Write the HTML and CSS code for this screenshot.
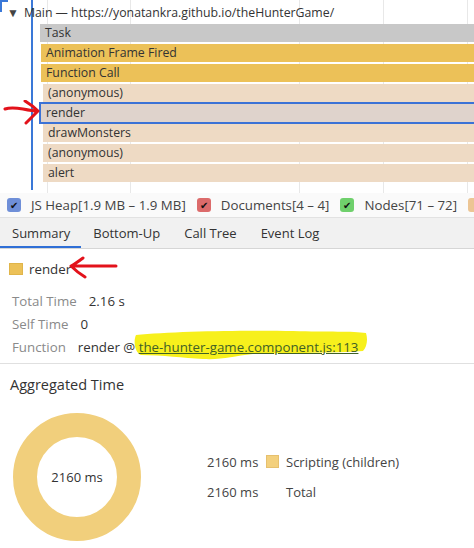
FILE: index.html
```html
<!DOCTYPE html>
<html>
<head>
<meta charset="utf-8">
<link rel="stylesheet" href="styles.css">
</head>
<body>
<div class="page">
  <section class="flame">
    <div class="grid">
      <span class="gl" style="left:47px"></span>
      <span class="gl" style="left:130px"></span>
      <span class="gl" style="left:299px"></span>
      <span class="gl" style="left:383px"></span>
      <span class="gl" style="left:467px"></span>
    </div>
    <div class="sel-corner"></div>
    <div class="sel-line"></div>
    <div class="track-head"><span class="tri">▼</span><span>Main — https://yonatankra.github.io/theHunterGame/</span></div>
    <div class="bars">
      <div class="bar task">Task</div>
      <div class="bar yellow">Animation Frame Fired</div>
      <div class="bar yellow">Function Call</div>
      <div class="bar beige">(anonymous)</div>
      <div class="bar beige selected">render</div>
      <div class="bar beige">drawMonsters</div>
      <div class="bar beige">(anonymous)</div>
      <div class="bar beige">alert</div>
    </div>
    <svg class="arrow1" width="40" height="26" viewBox="0 0 40 26"><path d="M2 9 C8 7 14 8 20 9 C25 10 30 11 34 11 M22 1 C27 4 31 7 35 11 C31 15 27 19 23 23" fill="none" stroke="#e3121b" stroke-width="3" stroke-linecap="round" stroke-linejoin="round"/></svg>
  </section>

  <div class="counters">
    <label class="cb"><span class="box blue">✔</span>JS Heap[1.9 MB – 1.9 MB]</label>
    <label class="cb"><span class="box red">✔</span>Documents[4 – 4]</label>
    <label class="cb"><span class="box green">✔</span>Nodes[71 – 72]</label>
    <span class="box orange"></span>
  </div>

  <nav class="tabs">
    <span class="tab active">Summary</span>
    <span class="tab">Bottom-Up</span>
    <span class="tab">Call Tree</span>
    <span class="tab">Event Log</span>
  </nav>

  <section class="summary">
    <div class="title"><span class="swatch"></span>render</div>
    <svg class="arrow2" width="52" height="24" viewBox="0 0 52 24"><path d="M48 10 C38 10 20 10 4 10 M15 2 C11 5 7 8 3 10 C7 14 12 18 17 21" fill="none" stroke="#e3121b" stroke-width="3" stroke-linecap="round" stroke-linejoin="round"/></svg>
    <div class="row"><span class="lbl">Total Time</span><span class="val">2.16 s</span></div>
    <div class="row"><span class="lbl">Self Time</span><span class="val">0</span></div>
    <div class="row"><span class="lbl">Function</span><span class="val">render @ <span class="linkwrap"><svg class="hl" width="236" height="32" viewBox="0 0 236 32"><path d="M3 6 C40 2 120 1 160 2 C195 3 220 2 233 4 C235 10 234 18 230 22 C200 24 160 24 120 25 C100 27 90 31 70 30 C50 29 30 26 8 26 C2 24 0 12 3 6 Z" fill="#f7f01c"/></svg><a class="link">the-hunter-game.component.js:113</a></span></span></div>
  </section>

  <section class="agg">
    <h3 class="agg-title">Aggregated Time</h3>
    <div class="agg-body">
      <div class="donut">
        <svg width="128" height="128" viewBox="0 0 128 128"><circle cx="64" cy="64" r="52" fill="none" stroke="#f1cf7c" stroke-width="24"/></svg>
        <span class="donut-label">2160 ms</span>
      </div>
      <div class="legend">
        <div class="lg-row"><span class="ms">2160 ms</span><span class="lg-sw"></span><span>Scripting (children)</span></div>
        <div class="lg-row"><span class="ms">2160 ms</span><span class="lg-sw none"></span><span>Total</span></div>
      </div>
    </div>
  </section>
</div>
</body>
</html>
```

FILE: styles.css
```css
* { box-sizing: border-box; }
html, body { margin: 0; padding: 0; background: #fff; }
body {
  font-family: "Open Sans", "Noto Sans", sans-serif;
  font-size: 12px;
  color: #333;
}
.page { width: 474px; height: 548px; overflow: hidden; }

.flame {
  position: relative;
  height: 193px;
  background: #fff;
  overflow: hidden;
}
.grid { position: absolute; inset: 0; }
.gl { position: absolute; top: 0; bottom: 0; width: 1px; background: rgba(0,0,0,0.09); }
.sel-corner {
  position: absolute; left: 0; top: 0; width: 8px; height: 12px;
  border-left: 2px solid #3a78d8; border-top: 2px solid #3a78d8;
}
.sel-line {
  position: absolute; left: 31px; top: 0; width: 2px; height: 190px; background: #3a78d8;
}
.track-head {
  position: relative;
  height: 24px;
  display: flex;
  align-items: center;
  padding-left: 7px;
  gap: 5px;
  color: #333;
  font-size: 12.3px;
}
.tri { font-size: 12px; color: #444; }
.bars {
  position: relative;
  display: flex;
  flex-direction: column;
  gap: 2px;
  padding-left: 41px;
}
.bar {
  height: 18px;
  line-height: 18px;
  padding-left: 5px;
  font-size: 12.3px;
  color: #333;
  white-space: nowrap;
}
.task { background: #c8c8c8; margin-left: -1px; }
.yellow { background: #ecc158; }
.beige { background: #eedac4; margin-left: 2px; }
.selected { background: #dfd3cc; outline: 2px solid #3b72d6; margin-left: 0; }
.arrow1 { position: absolute; left: 3px; top: 100px; }

.counters {
  height: 24px;
  display: flex;
  align-items: center;
  padding-left: 7px;
  gap: 11px;
  background: #fafafa;
  font-size: 13.3px;
  color: #444;
  white-space: nowrap;
  overflow: hidden;
}
.cb { display: flex; align-items: center; gap: 10px; }
.box {
  flex: none;
  width: 14px; height: 14px; border-radius: 3px;
  display: inline-flex; align-items: center; justify-content: center;
  font-size: 10px; color: #111; line-height: 1;
}
.box.blue { background: #6f8fd8; }
.box.red { background: #dc6b6b; }
.box.green { background: #6fd06c; }
.box.orange { background: #ecc594; }

.tabs {
  height: 32px;
  display: flex;
  align-items: stretch;
  background: #f1f1f1;
  border-top: 1px solid #e2e2e2;
  border-bottom: 1px solid #d6d6d6;
  font-size: 13px;
  color: #333;
}
.tab { display: flex; align-items: center; padding: 0 12px; }
.tab.active { box-shadow: inset 0 -2px 0 #2f6fd6; padding-right: 11px; }

.summary {
  position: relative;
  height: 115px;
  padding: 12px 0 0 9px;
  border-bottom: 1px solid #e0e0e0;
  font-size: 13.3px;
}
.title { display: flex; align-items: center; gap: 6px; height: 16px; color: #333; margin-bottom: 12px; font-size: 13.3px; }
.swatch { width: 14px; height: 12px; background: #ecc158; border: 1px solid #e0b54a; }
.arrow2 { position: absolute; left: 68px; top: 7px; }
.row { height: 23px; display: flex; align-items: center; padding-left: 3px; white-space: nowrap; }
.lbl { color: #8a8a8a; margin-right: 12px; }
.val { color: #333; }
.linkwrap { position: relative; display: inline-block; }
.hl { position: absolute; left: -6px; top: -9px; z-index: 0; }
.link { position: relative; z-index: 1; color: #3f6026; text-decoration: underline; }

.agg { padding: 11px 0 0 10px; }
.agg-title { margin: 0; font-weight: normal; font-size: 14.5px; color: #333; height: 24px; }
.agg-body { display: flex; align-items: center; margin-top: 14px; margin-left: 3px; }
.donut { position: relative; width: 128px; height: 128px; }
.donut svg { display: block; }
.donut-label { position: absolute; inset: 0; display: flex; align-items: center; justify-content: center; font-size: 13px; color: #333; }
.legend { margin-left: 66px; display: flex; flex-direction: column; gap: 9px; font-size: 13px; color: #444; margin-top: -1px; }
.lg-row { display: flex; align-items: center; height: 21px; }
.ms { width: 59px; }
.lg-sw { width: 13px; height: 13px; background: #f3d07d; border: 1px solid #e6c06e; margin-right: 7px; }
.lg-sw.none { background: none; border: none; }
```
